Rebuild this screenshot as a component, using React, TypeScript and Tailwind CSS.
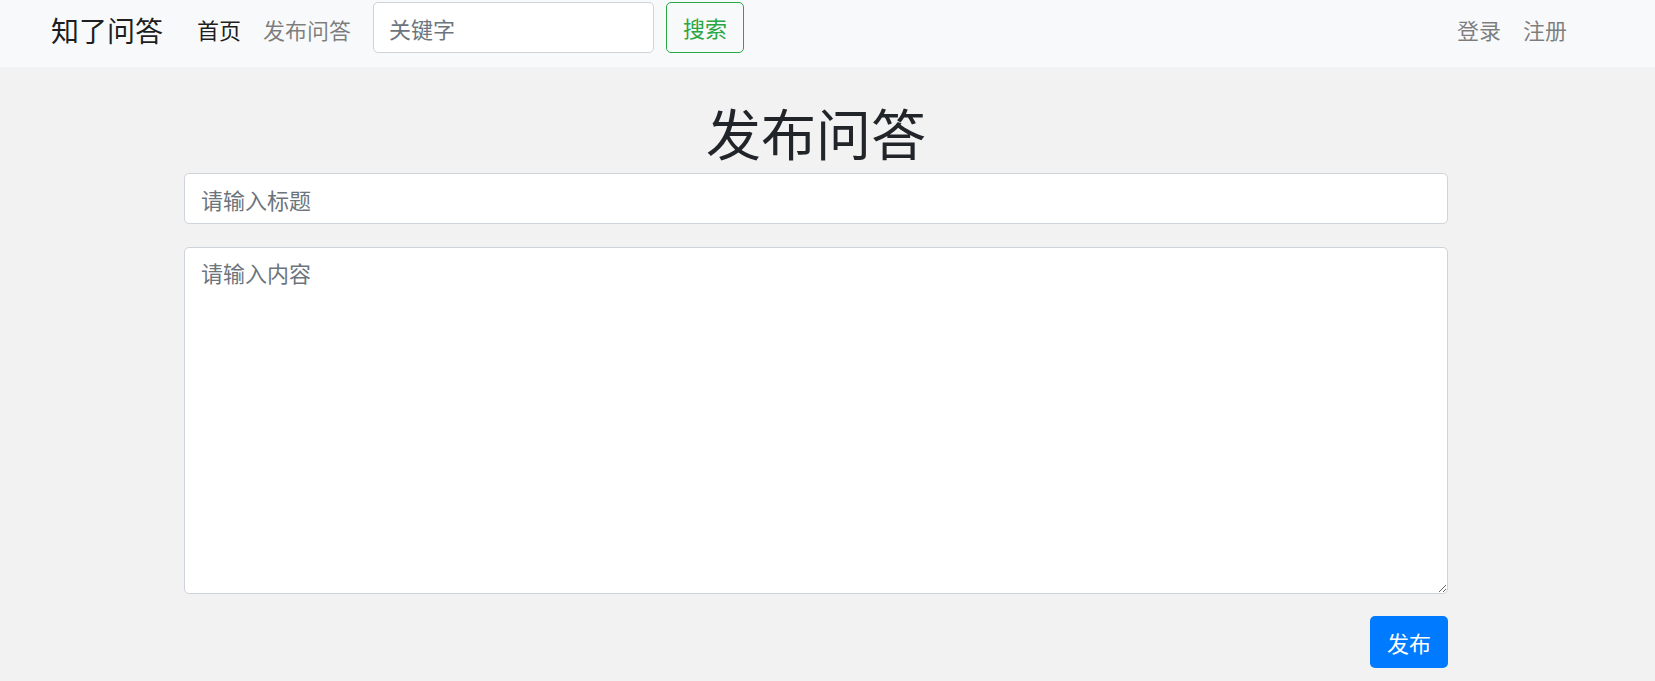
import React from "react";

const font = { fontFamily: '"Noto Sans CJK SC", "Noto Sans", sans-serif' };

const NavBar = () => (
  <nav className="flex h-[67px] items-start bg-[#f8f9fa] pl-[51px] pr-[88px] pt-[2px]">
    <a className="mt-[8px] text-[28px] leading-[40px] text-black/90">知了问答</a>
    <ul className="ml-[34px] mt-[9px] flex items-center text-[22px] leading-[36px]">
      <li className="text-black/90">首页</li>
      <li className="ml-[22px] text-black/50">发布问答</li>
    </ul>
    <form className="ml-[22px] flex items-center gap-[12px]" onSubmit={(e) => e.preventDefault()}>
      <input
        type="text"
        placeholder="关键字"
        className="h-[51px] w-[281px] rounded-[5px] border border-[#ced4da] bg-white px-[15px] text-[22px] text-[#495057] outline-none placeholder:text-[#6c757d]"
      />
      <button
        type="submit"
        className="h-[51px] w-[78px] rounded-[5px] border border-[#28a745] text-[22px] text-[#28a745]"
      >
        搜索
      </button>
    </form>
    <ul className="ml-auto mt-[9px] flex items-center gap-[22px] text-[22px] leading-[36px] text-black/50">
      <li>登录</li>
      <li>注册</li>
    </ul>
  </nav>
);

export default function App() {
  return (
    <div className="min-h-screen bg-[#f2f2f2]" style={font}>
      <NavBar />
      <main className="ml-[184px] w-[1264px]">
        <h1 className="mt-[31px] mb-[9px] text-center text-[55px] font-normal leading-[66px] text-[#212529]">
          发布问答
        </h1>
        <form className="flex flex-col" onSubmit={(e) => e.preventDefault()}>
          <input
            type="text"
            placeholder="请输入标题"
            className="h-[51px] w-full rounded-[5px] border border-[#ced4da] bg-white px-[16px] text-[22px] text-[#495057] outline-none placeholder:text-[#6c757d]"
          />
          <textarea
            placeholder="请输入内容"
            className="mt-[23px] h-[347px] w-full rounded-[5px] border border-[#ced4da] bg-white px-[16px] py-[8px] text-[22px] leading-[33px] text-[#495057] outline-none placeholder:text-[#6c757d]"
          />
          <div className="mt-[22px] flex justify-end">
            <button
              type="submit"
              className="h-[52px] w-[78px] rounded-[5px] bg-[#007bff] text-[22px] text-white"
            >
              发布
            </button>
          </div>
        </form>
      </main>
    </div>
  );
}
